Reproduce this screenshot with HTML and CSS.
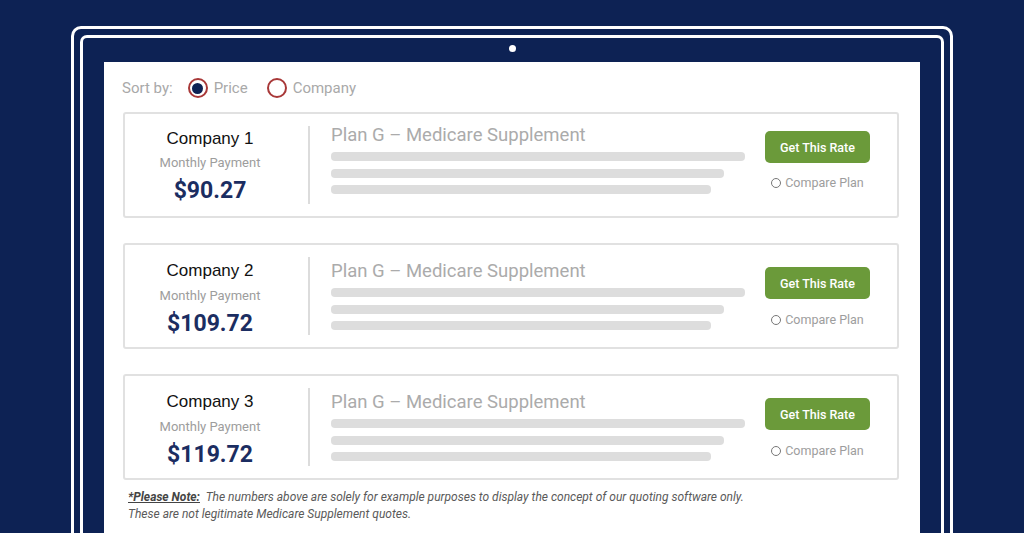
FILE: index.html
```html
<!DOCTYPE html>
<html>
<head>
<meta charset="utf-8">
<link rel="stylesheet" href="styles.css">
</head>
<body>
<div class="frame-outer">
  <div class="frame-inner">
    <div class="camera"></div>
    <div class="screen">
      <div class="sort-row">
        <span class="sort-label">Sort by:</span>
        <span class="radio checked"></span>
        <span class="sort-opt">Price</span>
        <span class="radio"></span>
        <span class="sort-opt">Company</span>
      </div>

      <div class="card">
        <div class="company">
          <div class="company-name">Company 1</div>
          <div class="company-sub">Monthly Payment</div>
          <div class="company-price">$90.27</div>
        </div>
        <div class="divider"></div>
        <div class="plan">
          <div class="plan-title">Plan G – Medicare Supplement</div>
          <div class="bar bar1"></div>
          <div class="bar bar2"></div>
          <div class="bar bar3"></div>
        </div>
        <div class="actions">
          <div class="btn">Get This Rate</div>
          <div class="compare"><span class="small-radio"></span>Compare Plan</div>
        </div>
      </div>

      <div class="card card-low">
        <div class="company">
          <div class="company-name">Company 2</div>
          <div class="company-sub">Monthly Payment</div>
          <div class="company-price">$109.72</div>
        </div>
        <div class="divider"></div>
        <div class="plan">
          <div class="plan-title">Plan G – Medicare Supplement</div>
          <div class="bar bar1"></div>
          <div class="bar bar2"></div>
          <div class="bar bar3"></div>
        </div>
        <div class="actions">
          <div class="btn">Get This Rate</div>
          <div class="compare"><span class="small-radio"></span>Compare Plan</div>
        </div>
      </div>

      <div class="card card-low">
        <div class="company">
          <div class="company-name">Company 3</div>
          <div class="company-sub">Monthly Payment</div>
          <div class="company-price">$119.72</div>
        </div>
        <div class="divider"></div>
        <div class="plan">
          <div class="plan-title">Plan G – Medicare Supplement</div>
          <div class="bar bar1"></div>
          <div class="bar bar2"></div>
          <div class="bar bar3"></div>
        </div>
        <div class="actions">
          <div class="btn">Get This Rate</div>
          <div class="compare"><span class="small-radio"></span>Compare Plan</div>
        </div>
      </div>

      <p class="note"><b><u>*Please Note:</u></b>&nbsp; The numbers above are solely for example purposes to display the concept of our quoting software only.<br>These are not legitimate Medicare Supplement quotes.</p>
    </div>
  </div>
</div>
</body>
</html>
```

FILE: styles.css
```css
html, body {
  margin: 0;
  padding: 0;
  height: 100%;
  overflow: hidden;
}
body {
  background: #0d2254;
  font-family: Roboto, "Liberation Sans", sans-serif;
  padding-top: 26px;
  padding-left: 71px;
  box-sizing: border-box;
}
.frame-outer {
  width: 882px;
  box-sizing: border-box;
  border: 3px solid #fff;
  border-bottom: none;
  border-radius: 10px 10px 0 0;
  padding: 6px 6px 0 6px;
  height: 600px;
}
.frame-inner {
  box-sizing: border-box;
  border: 3px solid #fff;
  border-bottom: none;
  border-radius: 7px 7px 0 0;
  padding: 7px 21px 0 21px;
  height: 600px;
}
.camera {
  width: 7px;
  height: 7px;
  border-radius: 50%;
  background: #fff;
  margin: 0 auto 10px;
}
.screen {
  background: #fff;
  height: 560px;
  padding: 14px 21px 0 19px;
  box-sizing: border-box;
}
.sort-row {
  display: flex;
  align-items: center;
  height: 24px;
  margin-left: -1px;
  margin-bottom: 12px;
  font-size: 15px;
  color: #a9a9a9;
}
.sort-label {
  margin-right: 15px;
}
.radio {
  width: 16px;
  height: 16px;
  border: 2px solid #a83838;
  border-radius: 50%;
  display: flex;
  align-items: center;
  justify-content: center;
  margin-right: 6px;
}
.radio.checked::after {
  content: "";
  width: 11px;
  height: 11px;
  border-radius: 50%;
  background: #0d2254;
}
.sort-opt {
  margin-right: 19px;
}
.card {
  display: flex;
  height: 106px;
  box-sizing: border-box;
  border: 2px solid #e1e1e1;
  border-radius: 3px;
  margin-bottom: 25px;
}
.company {
  width: 170px;
  text-align: center;
  padding-top: 14px;
}
.company-name {
  font-family: "Liberation Sans", Arial, sans-serif;
  font-size: 17px;
  line-height: 22px;
  color: #111;
}
.company-sub {
  font-size: 13px;
  line-height: 16px;
  color: #9d9d9d;
  margin-top: 5px;
}
.company-price {
  font-size: 23px;
  font-weight: 700;
  line-height: 28px;
  color: #1b2d61;
  margin-top: 6px;
}
.divider {
  width: 2px;
  height: 78px;
  background: #dcdcdc;
  margin-left: 13px;
  margin-top: 12px;
}
.plan {
  width: 414px;
  margin-left: 21px;
  padding-top: 9px;
}
.plan-title {
  font-size: 18.5px;
  line-height: 24px;
  color: #ababab;
  margin-bottom: 5px;
}
.bar {
  height: 9px;
  border-radius: 4px;
  background: #dddddd;
}
.bar1 { width: 414px; }
.bar2 { width: 393px; margin-top: 8px; }
.bar3 { width: 380px; margin-top: 7px; }
.actions {
  margin-left: 20px;
  padding-top: 17px;
  width: 105px;
  display: flex;
  flex-direction: column;
  align-items: center;
}
.card-low .company { padding-top: 15px; }
.card-low .company-sub { margin-top: 6px; }
.card-low .plan { padding-top: 14px; }
.card-low .actions { padding-top: 22px; }
.card-low .compare { margin-top: 13px; }
.btn {
  width: 105px;
  height: 32px;
  border-radius: 5px;
  background: #6b9a3a;
  color: #fff;
  font-size: 12.5px;
  font-weight: 500;
  display: flex;
  align-items: center;
  justify-content: center;
}
.compare {
  display: flex;
  align-items: center;
  margin-top: 12px;
  font-size: 12.5px;
  color: #9d9d9d;
  line-height: 16px;
}
.small-radio {
  width: 8px;
  height: 8px;
  border: 1.5px solid #777;
  border-radius: 50%;
  margin-right: 4px;
}
.note {
  margin: -16px 0 0 5px;
  font-size: 12px;
  line-height: 17px;
  font-style: italic;
  color: #5a5a5a;
}
.note b {
  font-weight: 700;
  color: #444;
}
```
